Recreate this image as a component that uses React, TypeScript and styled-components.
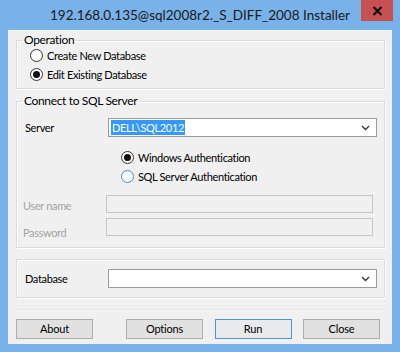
import React from "react";
import styled, { createGlobalStyle } from "styled-components";

const Global = createGlobalStyle`
  html, body { margin: 0; padding: 0; background: #79b1e9; }
  body { font-family: Lato, "Noto Sans", sans-serif; }
  * { box-sizing: border-box; }
`;

const Frame = styled.div`
  width: 400px;
  height: 352px;
  background: #79b1e9;
  padding: 0 8px 8px 8px;
  display: flex;
  flex-direction: column;
  font-family: Lato, "Noto Sans", sans-serif;
  font-size: 11px;
  letter-spacing: -0.35px;
  color: #000;
`;

const TitleBar = styled.div`
  position: relative;
  height: 30px;
  display: flex;
  align-items: center;
  justify-content: center;
  font-size: 13.5px;
  letter-spacing: 0;
  color: #1a1a1a;
  padding-bottom: 1px;
`;

const TitleText = styled.span`
  white-space: nowrap;
`;

const CloseBtn = styled.div`
  position: absolute;
  top: 0;
  right: -1px;
  width: 32px;
  height: 21px;
  background: #c75050;
  display: flex;
  align-items: center;
  justify-content: center;
`;

const Client = styled.div`
  flex: 1;
  background: #f0f0f0;
  display: flex;
  flex-direction: column;
  padding: 3px 7px 0 8px;
`;

const Group = styled.fieldset<{ $mt?: number }>`
  margin: ${(p) => p.$mt ?? 0}px 0 0 0;
  padding: 0 7px 0 8px;
  border: 1px solid #dadada;
  box-shadow: inset 1px 1px 0 #fff, 1px 1px 0 #fff;
  min-width: 0;
  display: flex;
  flex-direction: column;
`;

const Legend = styled.legend`
  padding: 0 2px;
  margin-left: -3px;
  line-height: 14px;
  font-size: 12px;
  color: #000;
`;

const RadioRow = styled.div<{ $indent?: number }>`
  height: 17px;
  display: flex;
  align-items: center;
  gap: 4px;
  padding-left: ${(p) => p.$indent ?? 0}px;
`;

const RadioCircle = styled.span<{ $checked?: boolean; $hot?: boolean }>`
  width: 13px;
  height: 13px;
  border-radius: 50%;
  border: 1px solid ${(p) => (p.$hot ? "#3c8ad6" : "#333")};
  background: #fff;
  display: flex;
  align-items: center;
  justify-content: center;
  flex: none;
  &::after {
    content: "";
    width: 7px;
    height: 7px;
    border-radius: 50%;
    background: #111;
    display: ${(p) => (p.$checked ? "block" : "none")};
  }
`;

const FieldRow = styled.div<{ $mt?: number; $right?: number }>`
  display: flex;
  align-items: center;
  margin-top: ${(p) => p.$mt ?? 0}px;
  padding-right: ${(p) => p.$right ?? 0}px;
`;

const FieldLabel = styled.span<{ $disabled?: boolean; $shift?: number; $dy?: number }>`
  width: 83px;
  flex: none;
  color: ${(p) => (p.$disabled ? "#a3a3a3" : "#000")};
  margin-left: ${(p) => p.$shift ?? 0}px;
  padding-right: ${(p) => -(p.$shift ?? 0)}px;
  margin-top: ${(p) => p.$dy ?? 0}px;
  margin-bottom: ${(p) => -(p.$dy ?? 0)}px;
`;

const Combo = styled.div`
  flex: 1;
  height: 19px;
  background: #fff;
  border: 1px solid #9a9a9a;
  display: flex;
  align-items: center;
  padding: 0 6px 0 2px;
`;

const ComboValue = styled.span`
  flex: 1;
  display: flex;
`;

const Selected = styled.span`
  background: #3399ff;
  color: #fff;
  line-height: 15px;
  padding: 0 1px;
`;

const TextBox = styled.div`
  flex: 1;
  height: 18px;
  background: #f0f0f0;
  border: 1px solid #c6c6c6;
`;

const RadioGroup = styled.div<{ $mt?: number }>`
  display: flex;
  flex-direction: column;
  gap: 2px;
  margin-top: ${(p) => p.$mt ?? 0}px;
`;

const GroupEnd = styled.div<{ $h: number }>`
  height: ${(p) => p.$h}px;
`;

const Footer = styled.div`
  margin-top: 11px;
  border-top: 1px solid #e6e6e6;
  box-shadow: inset 0 1px 0 #f7f7f7;
  flex: 1;
  display: flex;
  align-items: flex-start;
  padding: 9px 5px 0 0;
`;

const Button = styled.button<{ $default?: boolean }>`
  width: 77px;
  height: 20px;
  margin: 0;
  padding: 0;
  font-family: inherit;
  font-size: 11px;
  letter-spacing: -0.2px;
  color: #000;
  background: ${(p) => (p.$default ? "#e8eaec" : "#e1e1e1")};
  border: 1px solid ${(p) => (p.$default ? "#4f94d8" : "#adadad")};
  border-radius: 0;
  line-height: 16px;
`;

const Spacer = styled.div`
  flex: 1;
`;

const ButtonSet = styled.div`
  display: flex;
  gap: 11.5px;
`;

const Chevron = () => (
  <svg width="9" height="6" viewBox="0 0 9 6">
    <path d="M1 1 L4.5 4.5 L8 1" fill="none" stroke="#333" strokeWidth="1.3" />
  </svg>
);

const CloseX = () => (
  <svg width="11" height="10" viewBox="0 0 11 10">
    <path d="M1.5 1 L9.5 9 M9.5 1 L1.5 9" stroke="#111" strokeWidth="2.2" />
  </svg>
);

export default function App() {
  return (
    <>
      <Global />
      <Frame>
        <TitleBar>
          <TitleText>192.168.0.135@sql2008r2._S_DIFF_2008 Installer</TitleText>
          <CloseBtn>
            <CloseX />
          </CloseBtn>
        </TitleBar>
        <Client>
          <Group>
            <Legend>Operation</Legend>
            <RadioGroup>
              <RadioRow $indent={5}>
                <RadioCircle />
                <span>Create New Database</span>
              </RadioRow>
              <RadioRow $indent={5}>
                <RadioCircle $checked />
                <span>Edit Existing Database</span>
              </RadioRow>
            </RadioGroup>
            <GroupEnd $h={5} />
          </Group>

          <Group $mt={5}>
            <Legend>Connect to SQL Server</Legend>
            <FieldRow $mt={10}>
              <FieldLabel>Server</FieldLabel>
              <Combo>
                <ComboValue>
                  <Selected>DELL\SQL2012</Selected>
                </ComboValue>
                <Chevron />
              </Combo>
            </FieldRow>
            <RadioGroup $mt={12}>
              <RadioRow $indent={96}>
                <RadioCircle $checked />
                <span>Windows Authentication</span>
              </RadioRow>
              <RadioRow $indent={96}>
                <RadioCircle $hot />
                <span>SQL Server Authentication</span>
              </RadioRow>
            </RadioGroup>
            <FieldRow $mt={10} $right={4}>
              <FieldLabel $disabled $shift={-2} $dy={1}>User name</FieldLabel>
              <TextBox />
            </FieldRow>
            <FieldRow $mt={5} $right={4}>
              <FieldLabel $disabled $shift={-2} $dy={5}>Password</FieldLabel>
              <TextBox />
            </FieldRow>
            <GroupEnd $h={11} />
          </Group>

          <Group $mt={11}>
            <FieldRow $mt={9}>
              <FieldLabel>Database</FieldLabel>
              <Combo>
                <ComboValue />
                <Chevron />
              </Combo>
            </FieldRow>
            <GroupEnd $h={9} />
          </Group>

          <Footer>
            <Button>About</Button>
            <Spacer />
            <ButtonSet>
              <Button>Options</Button>
              <Button $default>Run</Button>
              <Button>Close</Button>
            </ButtonSet>
          </Footer>
        </Client>
      </Frame>
    </>
  );
}
